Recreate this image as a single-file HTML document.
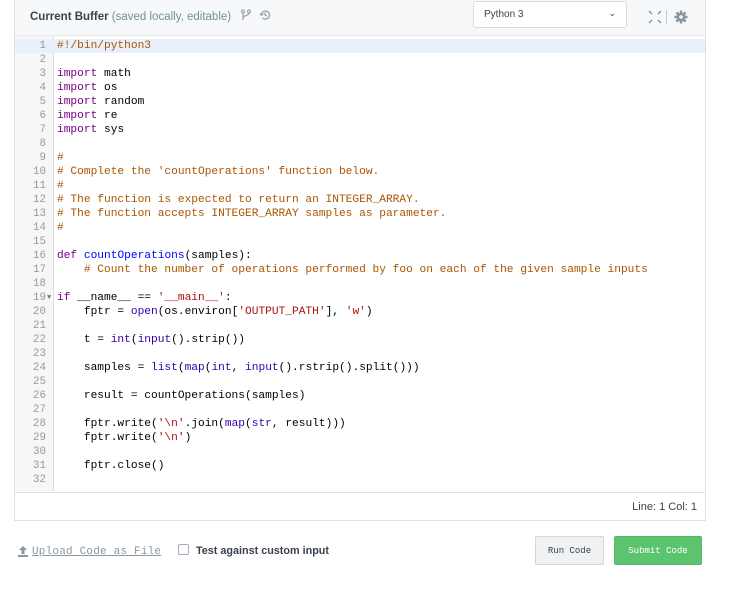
<!DOCTYPE html>
<html><head><style>
*{margin:0;padding:0;box-sizing:border-box}
body{width:750px;height:596px;background:#fff;font-family:"Liberation Sans",sans-serif;position:relative;overflow:hidden}
.panel{position:absolute;left:14px;top:0;width:692px;height:521px;border:1px solid #dfe1e5;border-top:none}
.hdr{position:absolute;left:0;top:0;width:690px;height:36px;background:#f7f8f9;border-bottom:1px solid #e6e8ea}
.title{position:absolute;left:15px;top:9px;font-size:11.5px;color:#39424e;font-weight:bold}
.title span{font-weight:normal;color:#738f93}
.sel{position:absolute;left:458px;top:1px;width:154px;height:27px;background:#fff;border:1px solid #d8dbde;border-radius:3px;font-size:10px;color:#39424e;padding:7px 10px}
.code{position:absolute;left:0;top:39px;width:690px;height:452px;font-family:"Liberation Mono",monospace;font-size:11.2px}
.gut{position:absolute;left:0;top:-3px;width:39px;height:455px;background:#f7f7f7;border-right:1px solid #ddd}
.ln{height:14px;line-height:14px;white-space:pre;position:relative}
.ln .n{position:absolute;left:0;width:31px;text-align:right;color:#999;font-size:10.8px}
.t{position:absolute;left:42px;color:#000}
.k{color:#708}.d{color:#00f}.b{color:#30a}.s{color:#a11}
.t.c,.c{color:#a50}.t.m{color:#a50}
.cur{background:#e8f0fb}
.stat{position:absolute;left:0;top:492px;width:690px;height:28px;border-top:1px solid #dfe1e5;font-size:11px;color:#39424e;text-align:right;padding:8px 8px 0 0}
.btn{position:absolute;top:536px;height:29px;font-family:"Liberation Mono",monospace;font-size:9px;border-radius:2px;text-align:center;line-height:29px}
</style></head><body>
<div class="panel">
<div class="hdr">
<div class="title">Current Buffer <span>(saved locally, editable)</span>
<svg width="12" height="12" viewBox="0 0 12 12" style="margin-left:6px;vertical-align:-1px"><g fill="none" stroke="#9aa3ab" stroke-width="1.2"><circle cx="3" cy="2.5" r="1.5"/><circle cx="9" cy="2.5" r="1.5"/><path d="M3 4v7M9 4c0 3-6 2-6 5"/></g></svg>
<svg width="12" height="12" viewBox="0 0 12 12" style="margin-left:3px;vertical-align:-1px"><g fill="none" stroke="#9aa3ab" stroke-width="1.3"><path d="M2.5 6a4 4 0 1 1 1.2 2.9"/><path d="M6 3.5V6l2 1.2"/><path d="M1 4.5l1.5 1.8 1.8-1.5"/></g></svg>
</div>
<div class="sel">Python 3<span style="position:absolute;right:10px;top:6px;font-size:9px">&#8964;</span></div>
<svg style="position:absolute;left:633px;top:10px" width="14" height="14" viewBox="0 0 14 14"><g stroke="#8a96a0" stroke-width="1.5" fill="none"><path d="M1 1l3 3M13 1l-3 3M1 13l3-3M13 13l-3-3"/></g></svg>
<div style="position:absolute;left:651px;top:10px;width:1px;height:14px;background:#c8ccd0"></div>
<svg style="position:absolute;left:659px;top:10px" width="14" height="14" viewBox="0 0 14 14"><circle cx="7" cy="7" r="4.5" fill="#8a96a0"/><g stroke="#8a96a0" stroke-width="2.4"><path d="M7 0.5v13M0.5 7h13M2.4 2.4l9.2 9.2M11.6 2.4l-9.2 9.2"/></g><circle cx="7" cy="7" r="1.8" fill="#f7f8f9"/></svg>
</div>
<div class="code">
<div class="gut"></div>
<div class="ln cur"><span class="n">1</span><span class="t m">#!/bin/python3</span></div>
<div class="ln"><span class="n">2</span></div>
<div class="ln"><span class="n">3</span><span class="t"><span class="k">import</span> math</span></div>
<div class="ln"><span class="n">4</span><span class="t"><span class="k">import</span> os</span></div>
<div class="ln"><span class="n">5</span><span class="t"><span class="k">import</span> random</span></div>
<div class="ln"><span class="n">6</span><span class="t"><span class="k">import</span> re</span></div>
<div class="ln"><span class="n">7</span><span class="t"><span class="k">import</span> sys</span></div>
<div class="ln"><span class="n">8</span></div>
<div class="ln"><span class="n">9</span><span class="t c">#</span></div>
<div class="ln"><span class="n">10</span><span class="t c"># Complete the 'countOperations' function below.</span></div>
<div class="ln"><span class="n">11</span><span class="t c">#</span></div>
<div class="ln"><span class="n">12</span><span class="t c"># The function is expected to return an INTEGER_ARRAY.</span></div>
<div class="ln"><span class="n">13</span><span class="t c"># The function accepts INTEGER_ARRAY samples as parameter.</span></div>
<div class="ln"><span class="n">14</span><span class="t c">#</span></div>
<div class="ln"><span class="n">15</span></div>
<div class="ln"><span class="n">16</span><span class="t"><span class="k">def</span> <span class="d">countOperations</span>(samples):</span></div>
<div class="ln"><span class="n">17</span><span class="t c">    # Count the number of operations performed by foo on each of the given sample inputs</span></div>
<div class="ln"><span class="n">18</span></div>
<div class="ln"><span class="n">19</span><span style="position:absolute;left:32px;top:0;font-size:7px;color:#777">&#9660;</span><span class="t"><span class="k">if</span> __name__ == <span class="s">'__main__'</span>:</span></div>
<div class="ln"><span class="n">20</span><span class="t">    fptr = <span class="b">open</span>(os.environ[<span class="s">'OUTPUT_PATH'</span>], <span class="s">'w'</span>)</span></div>
<div class="ln"><span class="n">21</span></div>
<div class="ln"><span class="n">22</span><span class="t">    t = <span class="b">int</span>(<span class="b">input</span>().strip())</span></div>
<div class="ln"><span class="n">23</span></div>
<div class="ln"><span class="n">24</span><span class="t">    samples = <span class="b">list</span>(<span class="b">map</span>(<span class="b">int</span>, <span class="b">input</span>().rstrip().split()))</span></div>
<div class="ln"><span class="n">25</span></div>
<div class="ln"><span class="n">26</span><span class="t">    result = countOperations(samples)</span></div>
<div class="ln"><span class="n">27</span></div>
<div class="ln"><span class="n">28</span><span class="t">    fptr.write(<span class="s">'\n'</span>.join(<span class="b">map</span>(<span class="b">str</span>, result)))</span></div>
<div class="ln"><span class="n">29</span><span class="t">    fptr.write(<span class="s">'\n'</span>)</span></div>
<div class="ln"><span class="n">30</span></div>
<div class="ln"><span class="n">31</span><span class="t">    fptr.close()</span></div>
<div class="ln"><span class="n">32</span></div>
</div>
<div class="stat">Line: 1 Col: 1</div>
</div>
<svg style="position:absolute;left:17px;top:545px" width="12" height="12" viewBox="0 0 12 12"><path d="M6 1L2 5h2.5v4h3V5H10z" fill="#8a96a0"/><rect x="1" y="10" width="10" height="2" fill="#8a96a0"/></svg>
<div style="position:absolute;left:32px;top:546px;font-family:'Liberation Mono',monospace;font-size:11px;letter-spacing:0.2px;color:#8a96a0;text-decoration:underline">Upload Code as File</div>
<div style="position:absolute;left:178px;top:544px;width:11px;height:11px;border:1px solid #aab;border-radius:2px;background:#fff"></div>
<div style="position:absolute;left:196px;top:545px;font-size:10.8px;font-weight:bold;color:#39424e">Test against custom input</div>
<div class="btn" style="left:535px;width:69px;background:#f0f1f3;border:1px solid #d3d6da;color:#39424e">Run Code</div>
<div class="btn" style="left:614px;width:88px;background:#5cc46f;color:#fff;border:1px solid #55b867">Submit Code</div>
</body></html>
